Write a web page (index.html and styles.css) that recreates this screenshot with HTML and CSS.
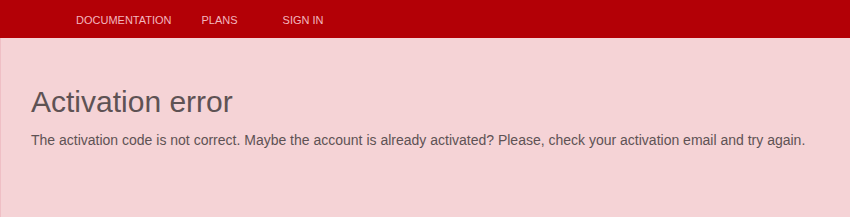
FILE: index.html
```html
<!DOCTYPE html>
<html>
<head>
<meta charset="utf-8">
<link rel="stylesheet" href="styles.css">
</head>
<body>
<nav class="navbar">
  <ul class="nav">
    <li><a href="#">DOCUMENTATION</a></li>
    <li><a href="#">PLANS</a></li>
    <li class="signin"><a href="#">SIGN IN</a></li>
  </ul>
</nav>
<div class="alert">
  <h1>Activation error</h1>
  <p>The activation code is not correct. Maybe the account is already activated? Please, check your activation email and try again.</p>
</div>
</body>
</html>
```
FILE: styles.css
```css
html, body {
  margin: 0;
  padding: 0;
  height: 100%;
}
body {
  font-family: "Liberation Sans", Arial, sans-serif;
  background: #f5d3d6;
  display: flex;
  flex-direction: column;
}
.navbar {
  background: #b30006;
  height: 38px;
  flex: none;
}
.nav {
  list-style: none;
  margin: 0;
  padding: 0 0 0 61px;
  display: flex;
  height: 38px;
  align-items: center;
}
.nav a {
  display: block;
  padding: 3px 15px 0;
  font-size: 11px;
  line-height: 35px;
  color: #f2b6be;
  text-decoration: none;
}
.nav .signin {
  margin-left: 15px;
}
.alert {
  flex: 1;
  border-left: 1px solid #efbfc5;
  padding: 47px 30px 0;
  color: #5e5254;
}
.alert h1 {
  margin: 0;
  font-size: 30px;
  font-weight: normal;
  line-height: 34px;
}
.alert p {
  margin: 11px 0 0;
  font-size: 14px;
  line-height: 20px;
}
```
